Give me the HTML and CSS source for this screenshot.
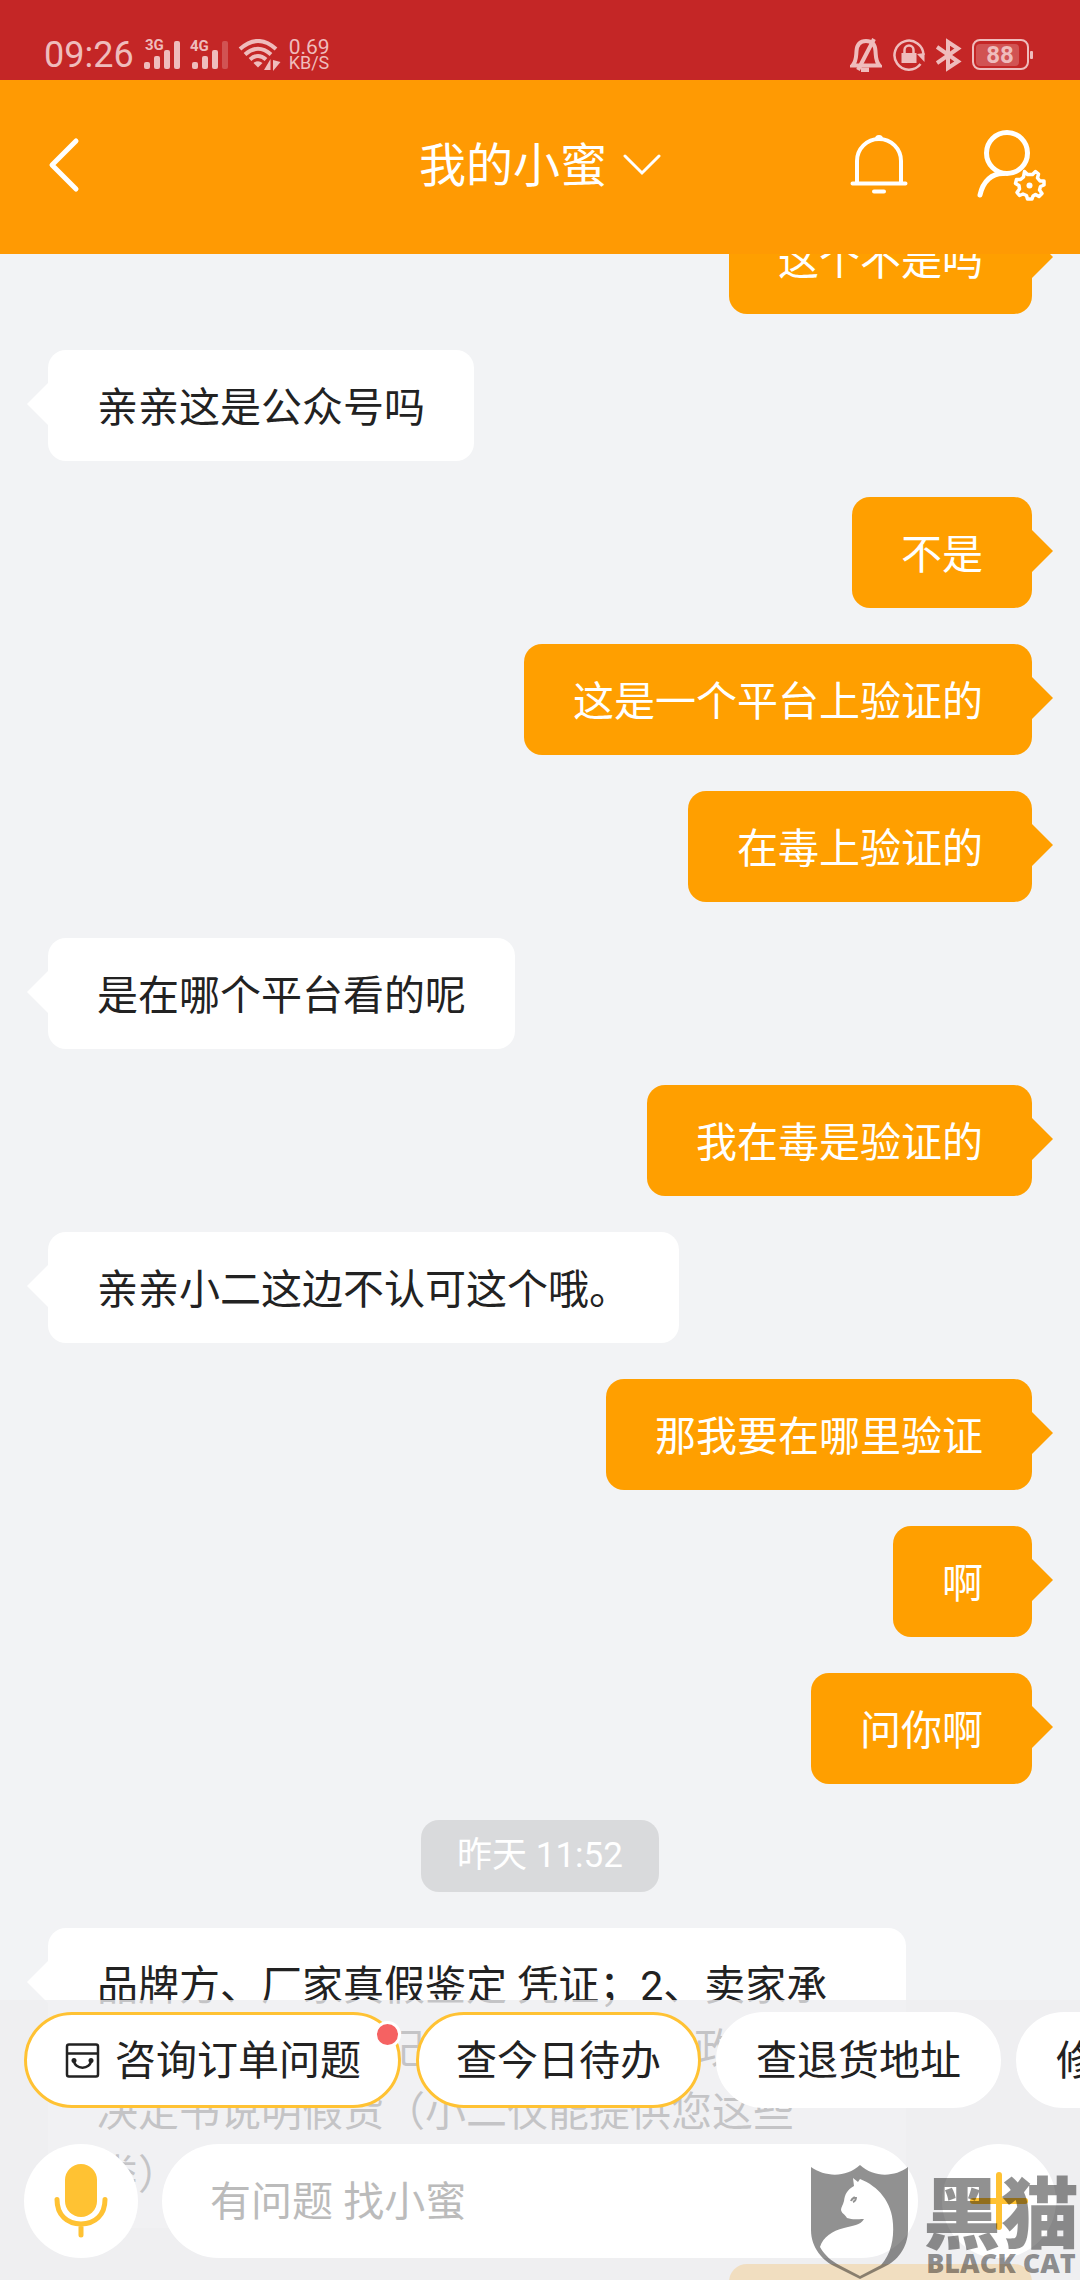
FILE: index.html
```html
<!DOCTYPE html>
<html lang="zh-CN">
<head>
    <meta charset="UTF-8">
    <meta name="viewport" content="width=device-width, initial-scale=1.0">
    <title>我的小蜜</title>
    <link rel="stylesheet" href="styles.css">
</head>
<body>

    <div class="app">
        <!-- Phone status bar -->
        <div class="status-bar">
            <div class="status-left">
                <span class="clock">09:26</span>
                <svg class="signal" width="38" height="30" viewBox="0 0 38 30" fill="currentColor">
                    <text class="signal-label" x="1" y="10">3G</text>
                    <rect x="0" y="22" width="6" height="7" rx="2"/>
                    <rect x="10" y="16" width="6" height="13" rx="2"/>
                    <rect x="20" y="10" width="6" height="19" rx="2"/>
                    <rect x="30" y="1" width="6" height="28" rx="2"/>
                </svg>
                <svg class="signal" width="40" height="30" viewBox="0 0 40 30" fill="currentColor">
                    <text class="signal-label" x="0" y="11">4G</text>
                    <rect x="2" y="22" width="6" height="7" rx="2"/>
                    <rect x="12" y="16" width="6" height="13" rx="2"/>
                    <rect x="22" y="10" width="6" height="19" rx="2"/>
                    <rect x="32" y="1" width="6" height="28" rx="2" opacity="0.3"/>
                </svg>
                <svg width="43" height="32" viewBox="0 0 43 32" fill="none" stroke="currentColor" stroke-width="4">
                    <path d="M2 10Q20 -6 38 10M7 15.500Q20 4 33 15.500M12 20.500Q20 13.500 28 20.500"/>
                    <path d="M15.500 24Q20 20.500 24.500 24L20 28.500Z" fill="currentColor" stroke="none"/>
                    <path d="M26 31L32.500 20V31ZM35 21L42.500 23L35 32Z" fill="currentColor" stroke="none"/>
                </svg>
                <span class="net-speed"><span>0.69</span><span class="unit">KB/S</span></span>
            </div>
            <div class="status-right">
                <svg width="32" height="34" viewBox="0 0 32 34" fill="none" stroke="currentColor" stroke-width="4">
                    <path d="M2.500 27.500H29.500C25.500 23 26 19 25.500 13C25 6 21.500 3 16 3C10.500 3 7 6 6.500 13C6 19 6.500 23 2.500 27.500Z"/>
                    <path d="M24 1L8 32M13 29.500V32H17V29.500"/>
                </svg>
                <svg width="34" height="34" viewBox="0 0 34 34" fill="none" stroke="currentColor" stroke-width="2.500">
                    <path d="M28.500 26A14.500 14.500 0 1 1 31.500 17"/>
                    <path d="M25 16L32.500 15L32.500 24Z" fill="currentColor" stroke="none"/>
                    <rect x="9.500" y="15" width="15" height="10" fill="currentColor" stroke="none"/>
                    <path d="M12.500 15V12A4.500 4.500 0 0 1 21.500 12V15"/>
                </svg>
                <svg width="26" height="34" viewBox="0 0 26 34" fill="none" stroke="currentColor" stroke-width="4">
                    <path d="M1 9L22 23.500L12 30V4L22 10.500L1 25"/>
                </svg>
                <svg width="62" height="32" viewBox="0 0 62 32" fill="none">
                    <rect x="1" y="1" width="55" height="29" rx="7" stroke="currentColor" stroke-width="2"/>
                    <rect x="4" y="5" width="43" height="22" rx="4" fill="currentColor" opacity="0.3"/>
                    <rect x="58" y="12" width="3" height="8" rx="1" fill="currentColor"/>
                    <text class="battery-label" x="28" y="24" text-anchor="middle" fill="currentColor">88</text>
                </svg>
            </div>
        </div>

        <!-- Page header -->
        <header class="header">
            <button type="button" class="icon-button back" aria-label="返回">
                <svg width="32" height="56" viewBox="0 0 32 56" fill="none" stroke="#fff" stroke-width="5" stroke-linecap="round" stroke-linejoin="round">
                    <path d="M28 4L4 28L28 52"/>
                </svg>
            </button>
            <button type="button" class="title">
                我的小蜜
                <svg width="38" height="22" viewBox="0 0 38 22" fill="none" stroke="#fff" stroke-width="3" stroke-linecap="round">
                    <path d="M2 2L19 19L36 2"/>
                </svg>
            </button>
            <div class="header-actions">
                <button type="button" class="icon-button" aria-label="消息通知">
                    <svg width="58" height="60" viewBox="0 0 58 60" fill="none" stroke="#fff" stroke-width="4" stroke-linecap="round">
                        <path d="M7 48V26A22 22 0 0 1 51 26V48M2.500 48.500H55.500M24 56.500H34"/>
                        <path d="M25 4A4 4 0 0 1 33 4Z" fill="#fff" stroke="none"/>
                    </svg>
                </button>
                <button type="button" class="icon-button" aria-label="个人设置">
                    <svg width="72" height="72" viewBox="0 0 72 72" fill="none" stroke="#fff" stroke-width="5" stroke-linecap="round">
                        <circle cx="31" cy="24" r="20.500"/>
                        <path d="M4 66C7 52 16 44 28 44.500"/>
                        <path stroke-width="3.500" stroke-linejoin="round" d="M48.500 42.500L51.500 45.500H56.500L59.500 42.500L62.500 45L61.500 49L64 52L68 52V56L64.500 57.500L63.500 61L66 64.500L63 67.500L59.500 65.500L57 67L56 70H51.500L50.500 66.500L47 65L43.500 66.500L41 63.500L43.500 60L43 56.500L39.500 54.500L40.500 50.500L44.500 50.500L47.500 48Z"/>
                        <circle cx="53.500" cy="56.500" r="3" fill="#fff" stroke="none"/>
                    </svg>
                </button>
            </div>
        </header>

        <!-- Conversation -->
        <main class="chat">
            <p class="message mine">这个不是吗</p>
            <p class="message">亲亲这是公众号吗</p>
            <p class="message mine">不是</p>
            <p class="message mine">这是一个平台上验证的</p>
            <p class="message mine">在毒上验证的</p>
            <p class="message">是在哪个平台看的呢</p>
            <p class="message mine">我在毒是验证的</p>
            <p class="message">亲亲小二这边不认可这个哦。</p>
            <p class="message mine">那我要在哪里验证</p>
            <p class="message mine">啊</p>
            <p class="message mine">问你啊</p>
            <time class="timestamp">昨天 11:52</time>
            <p class="message long">品牌方、厂家真假鉴定 凭证；2、卖家承<br>诺是假货的聊天记录；3、工商行政处罚<br>决定书说明假货（小二仅能提供您这些<br>类）</p>
            <p class="message mine">这个不是吗</p>
        </main>

        <!-- Shortcuts and input -->
        <footer class="composer">
            <div class="shortcuts">
                <button type="button" class="shortcut highlighted">
                    <svg width="36" height="36" viewBox="0 0 36 36" fill="none" stroke="#222" stroke-width="2.500">
                        <rect x="3" y="1.500" width="31" height="32" rx="2"/>
                        <path d="M3 10.500H34M10 17.500C10 27 27 27 27 17.500"/>
                        <circle cx="10" cy="17.500" r="2.500" fill="#222" stroke="none"/>
                        <circle cx="27" cy="17.500" r="2.500" fill="#222" stroke="none"/>
                    </svg>
                    咨询订单问题
                    <span class="dot"></span>
                </button>
                <button type="button" class="shortcut highlighted">查今日待办</button>
                <button type="button" class="shortcut">查退货地址</button>
                <button type="button" class="shortcut">修改订单</button>
            </div>
            <form class="input-row">
                <button type="button" class="round-button" aria-label="语音输入">
                    <svg width="54" height="76" viewBox="0 0 54 76" fill="none" stroke="#ffc233" stroke-width="5" stroke-linecap="round">
                        <rect x="11" y="1" width="32" height="53" rx="16" fill="#ffc233" stroke="none"/>
                        <path d="M3 36.500C3 52 13 61 27 61C41 61 51 52 51 36.500M27 61V72"/>
                    </svg>
                </button>
                <input type="text" class="question" placeholder="有问题 找小蜜" aria-label="有问题 找小蜜">
                <button type="button" class="round-button" aria-label="更多">
                    <svg width="58" height="58" viewBox="0 0 58 58" fill="none" stroke="#ffc233" stroke-width="6" stroke-linecap="round">
                        <path d="M29 3V55M3 29H55"/>
                    </svg>
                </button>
            </form>
        </footer>

        <!-- Watermark -->
        <div class="watermark">
            <svg width="98" height="116" viewBox="0 0 98 116">
                <path fill="#000" fill-opacity="0.430" fill-rule="evenodd" d="M0 3C14 13 35 14 49 1C63 14 84 13 97 3V66C97 84 86 97 73 103L49 115L25 103C12 97 0 84 0 66ZM42 14L43 22C36 26 34 30 33 37C32 41 30 43 30 46C31 50 34 50 36 54C42 56 46 55 53 55C50 61 41 62 33 64C21 67 12 73 9 83C14 92 21 97 28 101L49 112L70 101C80 90 83 75 82 60C81 38 67 22 49 15L47 18Z"/>
                <path fill="none" stroke="#000" stroke-opacity="0.430" stroke-width="2" d="M40 37C41 34 43 34 44 33M42 38C45 37 45 35 45 33"/>
            </svg>
            <div class="watermark-text">
                <span class="watermark-cn">黑猫</span>
                <span class="watermark-en">BLACK CAT</span>
            </div>
        </div>
    </div>

</body>
</html>
```
FILE: styles.css
```css
* {
    box-sizing: border-box;
}

body {
    margin: 0;
    background-color: #f2f3f5;
    color: #222;
    font-family: Roboto, "Noto Sans CJK SC", sans-serif;
    font-size: 41px;
    line-height: 63px;
}

button, input {
    font: inherit;
    color: inherit;
    border: none;
    background: none;
    padding: 0;
    margin: 0;
}

svg {
    display: block;
    flex-shrink: 0;
}

.app {
    position: relative;
    height: 100vh;
    overflow: hidden;
    display: flex;
    flex-direction: column;
}

/* Status bar */
.status-bar {
    height: 80px;
    flex-shrink: 0;
    padding: 32px 46px 0 44px;
    display: flex;
    justify-content: space-between;
    background-color: #c42626;
    color: #efbcbc;
    line-height: 48px;
    position: relative;
    z-index: 1;
}

.status-left, .status-right {
    display: flex;
    align-items: center;
    height: 46px;
}

.status-left {
    gap: 8px;
}

.status-right {
    gap: 10px;
}

.clock {
    font-size: 36px;
    font-weight: 400;
    margin-right: 2px;
}

.signal {
    overflow: visible;
}

.signal-label {
    font-size: 15px;
    font-weight: 700;
}

.battery-label {
    font-size: 24px;
    font-weight: 700;
}

.net-speed {
    display: flex;
    flex-direction: column;
    font-size: 21px;
    font-weight: 400;
    line-height: 16px;
}

.net-speed .unit {
    font-size: 18px;
}

/* Header */
.header {
    height: 174px;
    flex-shrink: 0;
    padding: 0 32px 4px;
    display: grid;
    grid-template-columns: 1fr auto 1fr;
    align-items: center;
    background-color: #ff9a03;
    color: #fff;
    position: relative;
    z-index: 1;
}

.icon-button {
    display: flex;
    cursor: pointer;
}

.back {
    padding-left: 16px;
}

.title {
    display: flex;
    align-items: center;
    gap: 16px;
    font-size: 47px;
    cursor: pointer;
}

.header-actions {
    display: flex;
    align-items: center;
    justify-content: flex-end;
    gap: 68px;
}

/* Conversation, scrolled so the first bubble is partly under the header */
.chat {
    flex: 1;
    min-height: 0;
    margin-top: -51px;
    padding: 0 48px;
    display: flex;
    flex-direction: column;
    align-items: flex-start;
    gap: 36px;
}

.message {
    position: relative;
    flex-shrink: 0;
    margin: 0;
    padding: 27px 49px 21px;
    border-radius: 18px;
    background-color: #fff;
}

.message::before {
    content: "";
    position: absolute;
    top: 33px;
    left: -21px;
    border: 21px solid transparent;
    border-left-width: 0;
    border-right-color: #fff;
}

.message.mine {
    align-self: flex-end;
    background-color: #ff9f00;
    color: #fff;
}

.message.mine::before {
    left: auto;
    right: -21px;
    border-left: 21px solid #ff9f00;
    border-right: none;
}

.message.long {
    width: 858px;
    max-width: 100%;
    white-space: nowrap;
}

.timestamp {
    flex-shrink: 0;
    align-self: center;
    padding: 0 36px;
    border-radius: 18px;
    background-color: #d9dadc;
    color: #fff;
    font-size: 35px;
    line-height: 72px;
}

/* Composer lies over the end of the conversation */
.composer {
    position: absolute;
    left: 0;
    right: 0;
    bottom: 0;
    padding: 12px 24px 22px;
    background-color: rgba(237, 238, 240, 0.8);
    display: flex;
    flex-direction: column;
    gap: 36px;
}

.shortcuts {
    display: flex;
    gap: 15px;
    margin-right: -24px;
    overflow: hidden;
}

.shortcut {
    position: relative;
    flex-shrink: 0;
    height: 96px;
    padding: 2px 37px 0;
    display: flex;
    align-items: center;
    gap: 15px;
    border: 3px solid #fff;
    border-radius: 48px;
    background-color: #fff;
    cursor: pointer;
}

.shortcut.highlighted {
    border-color: #ffc233;
}

.dot {
    position: absolute;
    top: 6px;
    right: -3px;
    width: 27px;
    height: 27px;
    border: 3px solid #fff;
    border-radius: 50%;
    background-color: #f56262;
}

.input-row {
    display: flex;
    gap: 24px;
}

.round-button {
    width: 114px;
    height: 114px;
    flex-shrink: 0;
    display: flex;
    align-items: center;
    justify-content: center;
    border-radius: 50%;
    background-color: #fff;
    cursor: pointer;
}

.question {
    flex: 1;
    min-width: 0;
    height: 114px;
    padding: 2px 48px 0;
    border-radius: 57px;
    background-color: #fff;
}

.question::placeholder {
    color: #bbb;
    opacity: 1;
}

/* Watermark */
.watermark {
    position: absolute;
    right: 1px;
    bottom: 0;
    display: flex;
    gap: 14px;
    color: rgba(0, 0, 0, 0.43);
    pointer-events: none;
}

.watermark-text {
    display: flex;
    flex-direction: column;
    align-items: center;
    padding-top: 4px;
}

.watermark-cn {
    font-family: "Noto Sans CJK SC", sans-serif;
    font-size: 78px;
    font-weight: 900;
    line-height: 82px;
}

.watermark-en {
    font-family: "Open Sans", sans-serif;
    font-size: 27px;
    font-weight: 800;
    line-height: 26px;
    white-space: nowrap;
}
```
